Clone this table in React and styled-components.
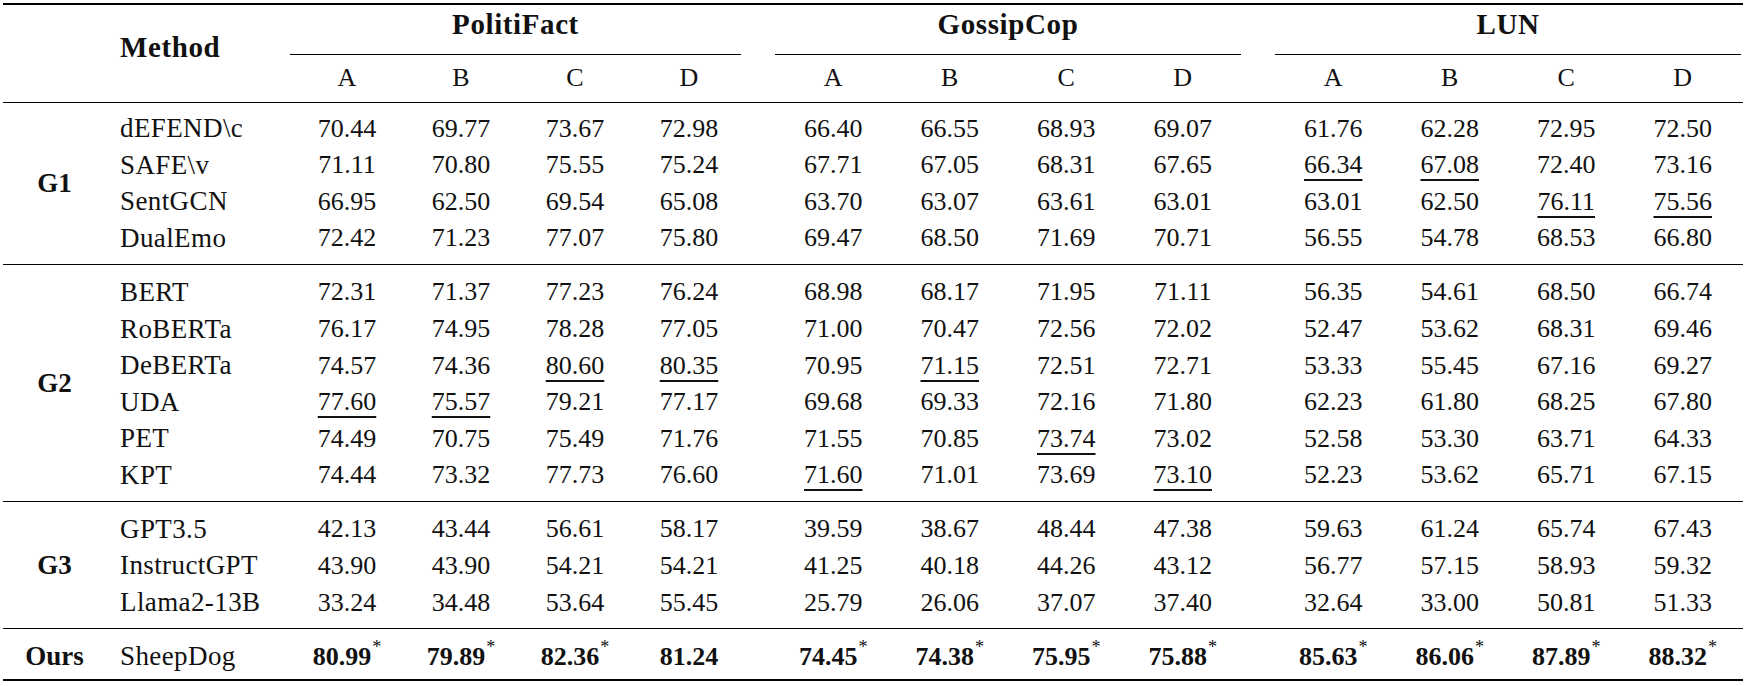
import React from "react";
import styled, { createGlobalStyle } from "styled-components";

const GlobalStyle = createGlobalStyle`
  html, body { margin: 0; padding: 0; background: #ffffff; }
  body { font-family: "Liberation Serif", "Times New Roman", serif; color: #111; }
`;

const COLS =
  "100px 187px repeat(4, 114px) 29px repeat(4, 116.5px) 34px repeat(4, 116.5px)";

const Page = styled.div`
  padding: 3px 3px 0 3px;
  width: 1740px;
`;

const Table = styled.div`
  display: flex;
  flex-direction: column;
  border-top: 2px solid #000;
  border-bottom: 2px solid #000;
  font-size: 26px;
`;

const Header = styled.div`
  display: grid;
  grid-template-columns: ${COLS};
  grid-template-rows: 50px 47px;
  border-bottom: 1.5px solid #000;
`;

const MethodHead = styled.div`
  grid-column: 2;
  grid-row: 1 / 3;
  display: flex;
  align-items: center;
  padding-left: 17px;
  padding-bottom: 12px;
  font-weight: 700;
  font-size: 29px;
  letter-spacing: 0.6px;
`;

const DatasetHead = styled.div`
  grid-row: 1;
  grid-column: ${(p) => p.$start} / span 4;
  display: flex;
  align-items: center;
  justify-content: center;
  font-weight: 700;
  font-size: 29px;
  letter-spacing: 0.6px;
  border-bottom: 1.2px solid #000;
  margin-right: ${(p) => p.$trim || 0}px;
  padding-bottom: 10px;
`;

const SubHead = styled.div`
  grid-row: 2;
  grid-column: ${(p) => p.$col};
  display: flex;
  align-items: center;
  justify-content: center;
  padding-bottom: 2px;
`;

const Group = styled.div`
  display: grid;
  grid-template-columns: ${COLS};
  grid-auto-rows: 36.6px;
  padding: ${(p) => (p.$first ? "7.4px" : "9.2px")} 0
    ${(p) => (p.$last ? "4.6px" : "7.2px")};
  border-bottom: ${(p) => (p.$last ? "none" : "1.2px solid #000")};
`;

const GroupLabel = styled.div`
  grid-column: 1;
  grid-row: 1 / span ${(p) => p.$span};
  display: flex;
  align-items: center;
  justify-content: center;
  font-weight: 700;
  font-size: 27px;
  padding-left: 3px;
`;

const MethodCell = styled.div`
  grid-column: 2;
  display: flex;
  align-items: center;
  padding-left: 17px;
  font-size: 27px;
  letter-spacing: 0.4px;
  white-space: nowrap;
`;

const NumCell = styled.div`
  grid-column: ${(p) => p.$col};
  display: flex;
  align-items: center;
  justify-content: center;
  white-space: nowrap;
`;

const Value = styled.span`
  font-weight: ${(p) => (p.$bold ? 700 : 400)};
  text-decoration: ${(p) => (p.$under ? "underline" : "none")};
  text-decoration-thickness: 1.5px;
  text-underline-offset: 6px;
`;

const Star = styled.sup`
  font-size: 0.7em;
  font-weight: 400;
  vertical-align: 0;
  position: relative;
  top: -0.5em;
  margin-left: 1px;
`;

const DATA_COLS = [3, 4, 5, 6, 8, 9, 10, 11, 13, 14, 15, 16];

const groups = [
  {
    label: "G1",
    rows: [
      ["dEFEND\\c", "70.44 69.77 73.67 72.98 66.40 66.55 68.93 69.07 61.76 62.28 72.95 72.50"],
      ["SAFE\\v", "71.11 70.80 75.55 75.24 67.71 67.05 68.31 67.65 _66.34 _67.08 72.40 73.16"],
      ["SentGCN", "66.95 62.50 69.54 65.08 63.70 63.07 63.61 63.01 63.01 62.50 _76.11 _75.56"],
      ["DualEmo", "72.42 71.23 77.07 75.80 69.47 68.50 71.69 70.71 56.55 54.78 68.53 66.80"],
    ],
  },
  {
    label: "G2",
    rows: [
      ["BERT", "72.31 71.37 77.23 76.24 68.98 68.17 71.95 71.11 56.35 54.61 68.50 66.74"],
      ["RoBERTa", "76.17 74.95 78.28 77.05 71.00 70.47 72.56 72.02 52.47 53.62 68.31 69.46"],
      ["DeBERTa", "74.57 74.36 _80.60 _80.35 70.95 _71.15 72.51 72.71 53.33 55.45 67.16 69.27"],
      ["UDA", "_77.60 _75.57 79.21 77.17 69.68 69.33 72.16 71.80 62.23 61.80 68.25 67.80"],
      ["PET", "74.49 70.75 75.49 71.76 71.55 70.85 _73.74 73.02 52.58 53.30 63.71 64.33"],
      ["KPT", "74.44 73.32 77.73 76.60 _71.60 71.01 73.69 _73.10 52.23 53.62 65.71 67.15"],
    ],
  },
  {
    label: "G3",
    rows: [
      ["GPT3.5", "42.13 43.44 56.61 58.17 39.59 38.67 48.44 47.38 59.63 61.24 65.74 67.43"],
      ["InstructGPT", "43.90 43.90 54.21 54.21 41.25 40.18 44.26 43.12 56.77 57.15 58.93 59.32"],
      ["Llama2-13B", "33.24 34.48 53.64 55.45 25.79 26.06 37.07 37.40 32.64 33.00 50.81 51.33"],
    ],
  },
  {
    label: "Ours",
    bold: true,
    rows: [
      ["SheepDog", "80.99* 79.89* 82.36* 81.24 74.45* 74.38* 75.95* 75.88* 85.63* 86.06* 87.89* 88.32*"],
    ],
  },
];

function Cell({ raw, col, bold }) {
  const under = raw.startsWith("_");
  const star = raw.endsWith("*");
  const text = raw.replace(/^_/, "").replace(/\*$/, "");
  return (
    <NumCell $col={col}>
      <Value $bold={bold} $under={under}>{text}</Value>
      {star && <Star>*</Star>}
    </NumCell>
  );
}

const datasets = [
  { name: "PolitiFact", start: 3, trim: 5 },
  { name: "GossipCop", start: 8 },
  { name: "LUN", start: 13 },
];

export default function App() {
  return (
    <Page>
      <GlobalStyle />
      <Table>
        <Header>
          <MethodHead>Method</MethodHead>
          {datasets.map((d) => (
            <DatasetHead key={d.name} $start={d.start} $trim={d.trim}>
              {d.name}
            </DatasetHead>
          ))}
          {DATA_COLS.map((c, i) => (
            <SubHead key={c} $col={c}>
              {"ABCD"[i % 4]}
            </SubHead>
          ))}
        </Header>
        {groups.map((g, gi) => (
          <Group key={g.label} $first={gi === 0} $last={gi === groups.length - 1}>
            <GroupLabel $span={g.rows.length}>{g.label}</GroupLabel>
            {g.rows.map(([name, vals]) => (
              <React.Fragment key={name}>
                <MethodCell>{name}</MethodCell>
                {vals.split(" ").map((v, i) => (
                  <Cell key={i} raw={v} col={DATA_COLS[i]} bold={g.bold} />
                ))}
              </React.Fragment>
            ))}
          </Group>
        ))}
      </Table>
    </Page>
  );
}
